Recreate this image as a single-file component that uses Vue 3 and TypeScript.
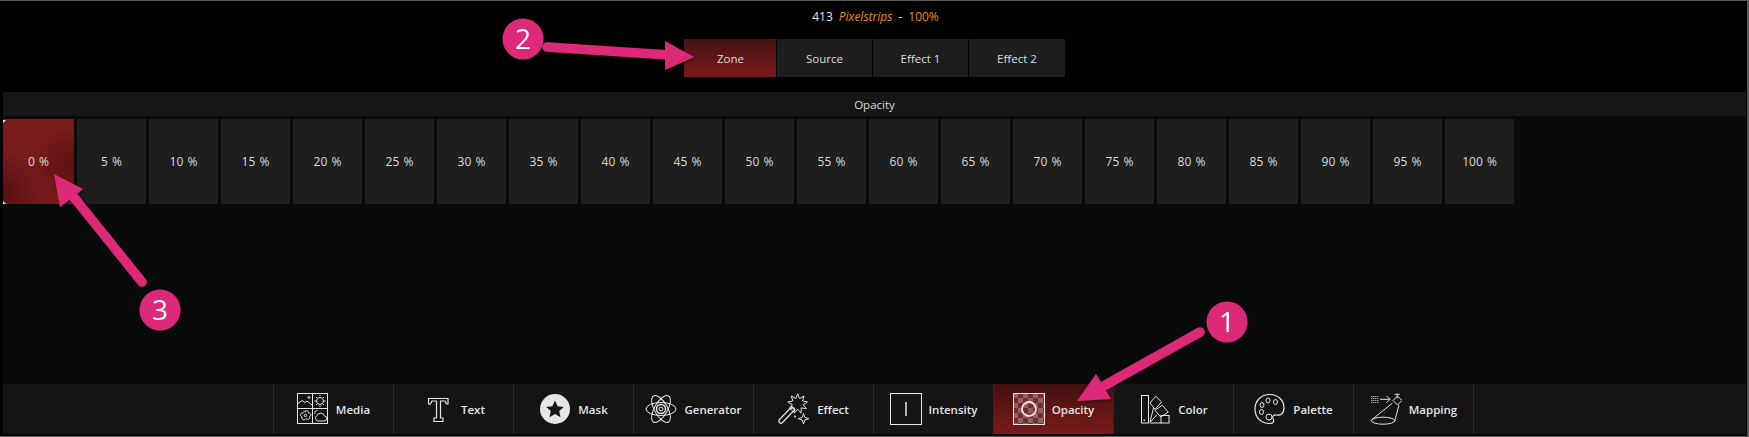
<template>
  <div class="screen">
    <div class="header">
      <span class="num">413</span>
      <em class="orange">Pixelstrips</em>
      <span class="num">-</span>
      <span class="orange">100%</span>
    </div>

    <div class="tabs">
      <div
        v-for="(tab, i) in tabs"
        :key="tab"
        class="tab"
        :class="{ active: i === 0 }"
      >
        {{ tab }}
      </div>
    </div>

    <div class="panel">
      <div class="panel-title">Opacity</div>
      <div class="cells">
        <div
          v-for="(v, i) in values"
          :key="v"
          class="cell"
          :class="{ active: i === 0 }"
        >
          {{ v }} %
        </div>
      </div>
    </div>

    <div class="toolbar">
      <div
        v-for="b in toolButtons"
        :key="b"
        class="tool"
        :class="{ active: b === 'Opacity' }"
      >
        <svg class="icon" viewBox="0 0 32 32" fill="none" stroke="#e6e6e6" stroke-width="1">
          <template v-if="b === 'Media'">
            <rect x="0.5" y="0.5" width="30" height="30" />
            <path d="M15.5 1V31M1 15.5H31" />
            <path d="M1 10.5l4-3 3 2 2-1.500 2.500 2 3 2.500" />
            <circle cx="12" cy="4.500" r="1" />
            <circle cx="23" cy="8" r="3.500" />
            <path d="M23 2v1.500M23 12.500V14M17.500 8h1.500M27 8h1.500M19 4l1 1M26 11l1 1M19 12l1-1M26 5l1-1" />
            <path d="M8 18.500c2-2 4 0 3.500 1.500 2.500-.5 3.500 3 1 3.500 1 2.500-2 4-3.500 2-1.500 2.500-5 1-4-1.500-2.500-1-2-4.500 1-4 0-1 1-2 2.500-1.500z" />
            <circle cx="8.500" cy="22.500" r="1.200" />
            <path d="M18 21a2.500 2.500 0 0 1 2.500-3.500M21 28h6a2.500 2.500 0 0 0 .5-5 4 4 0 0 0-7.500-.5 3 3 0 0 0 1 5.500z" />
          </template>
          <template v-else-if="b === 'Text'">
            <path d="M6.500 5.500H26v5.500h-1.500l-1.500-3h-4.500v17h2.500v3.500h-9v-3.500h2.500v-17H10l-1.500 3H6.500z" stroke-width="1.200" />
          </template>
          <template v-else-if="b === 'Mask'">
            <circle cx="16" cy="16" r="15" fill="#e6e6e6" stroke="none" />
            <path d="M16 7.500l2.600 5.700 6.200.7-4.600 4.200 1.300 6.100-5.500-3.100-5.500 3.100 1.300-6.100-4.600-4.200 6.200-.7z" fill="#141414" stroke="none" />
          </template>
          <template v-else-if="b === 'Generator'">
            <ellipse cx="16" cy="16" rx="15" ry="6.500" />
            <ellipse cx="16" cy="16" rx="15" ry="6.500" transform="rotate(60 16 16)" />
            <ellipse cx="16" cy="16" rx="15" ry="6.500" transform="rotate(120 16 16)" />
            <circle cx="16" cy="16" r="4.500" stroke-width="1.500" />
            <circle cx="16" cy="16" r="2" />
          </template>
          <template v-else-if="b === 'Effect'">
            <path d="M1.500 26.500L14 13.500l3 3L4.500 29.500a2.100 2.100 0 0 1-3-3z" stroke-width="1.200" />
            <path d="M12 15.500l3 3" />
            <polygon :points="starPoints" />
            <path d="M25.500 20.500l1.300 3.900 3.900 1.300-3.900 1.300-1.300 3.900-1.300-3.900-3.900-1.300 3.900-1.300z" />
            <circle cx="17" cy="23.500" r="1" fill="#e6e6e6" stroke="none" />
          </template>
          <template v-else-if="b === 'Intensity'">
            <rect x="0.500" y="0.500" width="31" height="31" />
            <path d="M16 9v14" stroke-width="1.500" />
          </template>
          <template v-else-if="b === 'Opacity'">
            <rect x="0.500" y="0.500" width="31" height="31" fill="url(#checker)" />
            <circle cx="16" cy="16" r="7" stroke-width="1.800" stroke="#f0e6e6" />
          </template>
          <template v-else-if="b === 'Color'">
            <rect x="2.500" y="2.500" width="7" height="27.500" />
            <rect x="4.500" y="26.500" width="1.500" height="1.500" fill="#e6e6e6" stroke="none" />
            <path d="M16.700 3.300l6 5.700-6.700 7.300-5-6.300z" />
            <path d="M23.300 12.300l6 6.700-7.600 5-5.700-6.700z" />
            <rect x="22" y="22.500" width="8" height="7.500" />
            <path d="M11 29l3.500-14M11 29.500l7-8M11 30h11" />
          </template>
          <template v-else-if="b === 'Palette'">
            <path d="M15.500 1.500C7 1.500 1 8 1 16c0 9 6.500 14.500 14.500 14.500 4 0 5-2 3.500-5-1-2.500 1-4 3.500-3.500 4 .5 7.500-1 7.500-7C30 7 24 1.500 15.500 1.500z" stroke-width="1.200" />
            <ellipse cx="8" cy="12" rx="2" ry="2.500" />
            <ellipse cx="14" cy="7.500" rx="2" ry="2.500" />
            <ellipse cx="21.500" cy="9" rx="2" ry="2.500" />
            <ellipse cx="7.500" cy="19" rx="2" ry="2.500" />
            <circle cx="15" cy="24" r="3" />
          </template>
          <template v-else>
            <path d="M1.300 3.500h7.400M1.300 5.500h7.400M1.300 7.500h7.400M1.300 9.500h7.400" stroke-dasharray="1 1" />
            <path d="M10 6.300h10M16.500 2.800l3.500 3.500-3.500 3.500" />
            <path d="M24.700 1.300h5M27.200 1.300v4" />
            <path d="M23 7.500l4.500-4.500 4.500 4.500-4.500 4.500z" />
            <path d="M22.500 10L1.500 27M29 12l-4.500 17" />
            <ellipse cx="13" cy="27.700" rx="11.700" ry="3.500" />
          </template>
        </svg>
        <span>{{ b }}</span>
      </div>
    </div>

    <svg class="callouts" width="1749" height="437" viewBox="0 0 1749 437">
      <defs>
        <filter id="sh" x="-10%" y="-10%" width="120%" height="120%">
          <feDropShadow dx="1" dy="1" stdDeviation="1.500" flood-color="#000" flood-opacity="0.5" />
        </filter>
        <pattern id="checker" width="10" height="10" patternUnits="userSpaceOnUse">
          <rect width="10" height="10" fill="#6e2e2e" />
          <rect width="5" height="5" fill="#96605e" />
          <rect x="5" y="5" width="5" height="5" fill="#96605e" />
        </pattern>
      </defs>
      <g v-for="c in callouts" :key="c.n" filter="url(#sh)">
        <line :x1="c.tail[0]" :y1="c.tail[1]" :x2="c.neck[0]" :y2="c.neck[1]" stroke="#dc2a78" stroke-width="9.500" stroke-linecap="round" />
        <polygon :points="c.head" fill="#dc2a78" />
        <circle :cx="c.cx" :cy="c.cy" r="20.500" fill="#dc2a78" />
        <text :x="c.cx" :y="c.cy + 10" text-anchor="middle" class="num-label">{{ c.n }}</text>
      </g>
    </svg>
  </div>
</template>

<script setup lang="ts">
interface Callout {
  n: number;
  cx: number;
  cy: number;
  tail: [number, number];
  neck: [number, number];
  head: string;
}

const tabs: string[] = ["Zone", "Source", "Effect 1", "Effect 2"];
const values: number[] = Array.from({ length: 21 }, (_, i) => i * 5);
const toolButtons: string[] = [
  "Media",
  "Text",
  "Mask",
  "Generator",
  "Effect",
  "Intensity",
  "Opacity",
  "Color",
  "Palette",
  "Mapping",
];

// spiky burst on the wand icon
const starPoints: string = Array.from({ length: 18 }, (_, i) => {
  const r = i % 2 === 0 ? 10 : 5.5;
  const a = (i * Math.PI) / 9 - Math.PI / 2;
  return `${(19.7 + r * Math.cos(a)).toFixed(1)},${(10.7 + r * Math.sin(a)).toFixed(1)}`;
}).join(" ");

const callouts: Callout[] = [
  { n: 1, cx: 1227, cy: 322, tail: [1200, 332], neck: [1100, 388], head: "1077,401 1096,374 1111,399" },
  { n: 2, cx: 523, cy: 39, tail: [547, 47], neck: [670, 55], head: "694,57 665,41 665,70" },
  { n: 3, cx: 160, cy: 310, tail: [142, 282], neck: [72, 195], head: "54,174 83,189 60,207" },
];
</script>

<style scoped>
.screen {
  position: relative;
  width: 1749px;
  height: 437px;
  box-sizing: border-box;
  background: #000;
  border-top: 1px solid #5a5a5a;
  border-right: 2px solid #5a5a5a;
  border-bottom: 1px solid #5a5a5a;
  padding: 0 1px 2px 3px;
  display: flex;
  flex-direction: column;
  font-family: "Open Sans", "Noto Sans", sans-serif;
  font-size: 11.5px;
  color: #dcdcdc;
  overflow: hidden;
}
.header {
  height: 38px;
  padding: 8px 0 0 2px;
  box-sizing: border-box;
  display: flex;
  justify-content: center;
  gap: 6px;
  font-size: 12px;
  line-height: 16px;
}
.num {
  color: #e8e8e8;
}
.orange {
  color: #e8920c;
}
.tabs {
  height: 38px;
  display: flex;
  margin-left: 681px;
}
.tab {
  width: 95px;
  margin-right: 1px;
  background: #1e1e1e;
  display: flex;
  align-items: center;
  justify-content: center;
}
.tab:last-child {
  width: 96px;
  margin-right: 0;
}
.tab.active {
  width: 92px;
  padding-left: 1px;
  box-sizing: border-box;
  background: linear-gradient(#451414, #7a1a1a);
}
.panel {
  margin-top: 15px;
  flex: 1;
  background: #0a0a0a;
  display: flex;
  flex-direction: column;
}
.panel-title {
  height: 24px;
  background: #161616;
  display: flex;
  align-items: center;
  justify-content: center;
}
.cells {
  display: flex;
  gap: 3px;
  margin-top: 3px;
  padding-left: 1px;
}
.cell {
  width: 69px;
  height: 85px;
  background: #1e1e1e;
  display: flex;
  align-items: center;
  justify-content: center;
  font-size: 12px;
  word-spacing: 1px;
}
.cell.active {
  position: relative;
  width: 71px;
  margin-left: -1px;
  background:
    radial-gradient(ellipse 45px 40px at 100% 55%, #5a1010 0%, rgba(90, 16, 16, 0) 100%),
    radial-gradient(ellipse 40px 40px at 0% 85%, #551010 0%, rgba(85, 16, 16, 0) 100%),
    #7a1c1c;
}
.cell.active::before,
.cell.active::after {
  content: "";
  position: absolute;
  left: 0;
  width: 3px;
  height: 3px;
  background: #f0f0f0;
}
.cell.active::before {
  top: 1px;
  clip-path: polygon(0 0, 100% 0, 0 100%);
}
.cell.active::after {
  bottom: 0;
  clip-path: polygon(0 0, 100% 100%, 0 100%);
}
.toolbar {
  height: 50px;
  flex-shrink: 0;
  background: #141414;
  display: flex;
  padding-left: 270px;
}
.tool {
  width: 119px;
  border-left: 1px solid #2c2c2c;
  display: flex;
  align-items: center;
  justify-content: center;
  gap: 7px;
  font-weight: 600;
  color: #e4e4e4;
}
.tool:last-child {
  border-right: 1px solid #2c2c2c;
}
.tool.active {
  background: linear-gradient(#451010, #7a1a1a);
}
.icon {
  width: 32px;
  height: 32px;
  flex-shrink: 0;
}
.callouts {
  position: absolute;
  left: 0;
  top: -1px;
  pointer-events: none;
}
.num-label {
  font-family: "Open Sans", sans-serif;
  font-size: 28px;
  fill: #fff;
}
</style>
